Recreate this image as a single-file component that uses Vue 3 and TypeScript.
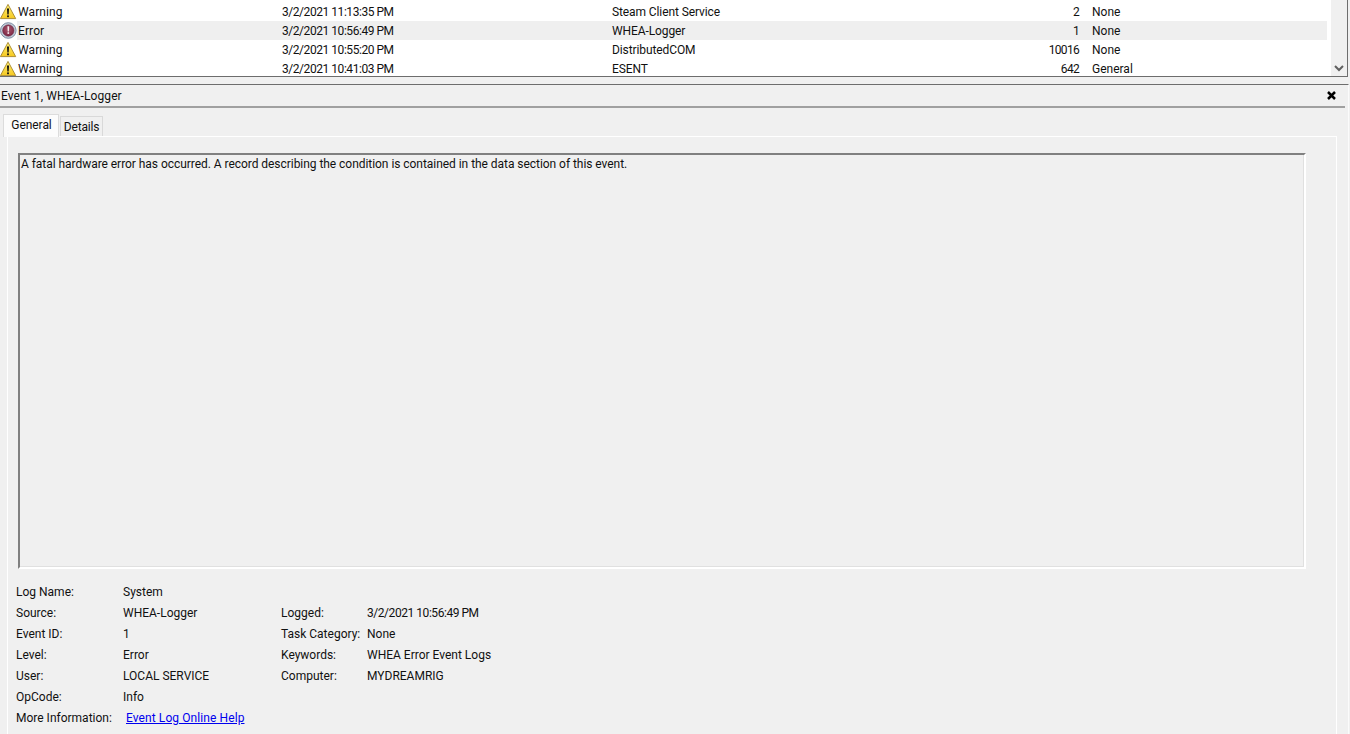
<script setup lang="ts">
interface Row { level: string; date: string; source: string; id: string; cat: string }
const rows: Row[] = [
  { level: 'Warning', date: '3/2/2021 11:13:35 PM', source: 'Steam Client Service', id: '2', cat: 'None' },
  { level: 'Error', date: '3/2/2021 10:56:49 PM', source: 'WHEA-Logger', id: '1', cat: 'None' },
  { level: 'Warning', date: '3/2/2021 10:55:20 PM', source: 'DistributedCOM', id: '10016', cat: 'None' },
  { level: 'Warning', date: '3/2/2021 10:41:03 PM', source: 'ESENT', id: '642', cat: 'General' },
]
const details: [string, string, string, string][] = [
  ['Log Name:', 'System', '', ''],
  ['Source:', 'WHEA-Logger', 'Logged:', '3/2/2021 10:56:49 PM'],
  ['Event ID:', '1', 'Task Category:', 'None'],
  ['Level:', 'Error', 'Keywords:', 'WHEA Error Event Logs'],
  ['User:', 'LOCAL SERVICE', 'Computer:', 'MYDREAMRIG'],
  ['OpCode:', 'Info', '', ''],
]
</script>

<template>
  <div class="app">
    <section class="list">
      <div class="rows">
        <div v-for="r in rows" :key="r.date" class="row">
          <span class="icon">
            <svg v-if="r.level === 'Warning'" width="17" height="17" viewBox="0 0 17 17">
              <defs>
                <linearGradient id="wg" x1="0" y1="0" x2="0" y2="1">
                  <stop offset="0" stop-color="#fff27a" />
                  <stop offset="1" stop-color="#f6c81e" />
                </linearGradient>
              </defs>
              <path d="M8 1.4 15.7 15.6H.4Z" fill="url(#wg)" stroke="#a5862a" stroke-width=".9" stroke-linejoin="round" />
              <path d="M7 5.6h2l-.35 6h-1.3Z" fill="#111" />
              <rect x="7.1" y="12.4" width="1.8" height="1.8" fill="#111" />
            </svg>
            <svg v-else width="17" height="17" viewBox="0 0 17 17">
              <defs>
                <radialGradient id="eg" cx=".5" cy=".4" r=".65">
                  <stop offset="0" stop-color="#a8576f" />
                  <stop offset="1" stop-color="#7a2240" />
                </radialGradient>
              </defs>
              <circle cx="8.3" cy="8.5" r="7.8" fill="#c3ccd8" stroke="#74849c" stroke-width=".9" />
              <circle cx="8.3" cy="8.5" r="5.7" fill="url(#eg)" stroke="#5e2a44" stroke-width=".5" />
              <path d="M7.4 4.2h1.8l-.3 5.2H7.7Z" fill="#f4e8ec" />
              <rect x="7.5" y="10.2" width="1.6" height="1.7" fill="#f4e8ec" />
            </svg>
          </span>
          <div class="cells" :class="{ sel: r.level === 'Error' }">
            <span class="level">{{ r.level }}</span>
            <span class="num">{{ r.date }}</span>
            <span class="source">{{ r.source }}</span>
            <span class="id">{{ r.id }}</span>
            <span class="cat">{{ r.cat }}</span>
          </div>
        </div>
      </div>
      <div class="scrollbar">
        <svg width="10" height="7" viewBox="0 0 10 7"><path d="M1 1l4 4 4-4" fill="none" stroke="#606060" stroke-width="2" /></svg>
      </div>
    </section>

    <section class="pane">
      <header class="pane-head">
        <span class="pane-title">Event 1, WHEA-Logger</span>
        <svg class="close" width="9" height="9" viewBox="0 0 9 9"><path d="M1 1l7 7M8 1L1 8" stroke="#000" stroke-width="2.5" /></svg>
      </header>

      <div class="tabs">
        <span class="tab active">General</span>
        <span class="tab">Details</span>
      </div>

      <div class="panel">
        <div class="message">A fatal hardware error has occurred. A record describing the condition is contained in the data section of this event.</div>
        <div class="details">
          <template v-for="d in details" :key="d[0]">
            <span>{{ d[0] }}</span>
            <span>{{ d[1] }}</span>
            <span>{{ d[2] }}</span>
            <span :class="{ num: d[3].endsWith('PM') }">{{ d[3] }}</span>
          </template>
          <span>More Information:</span>
          <a class="link" href="#">Event Log Online Help</a>
        </div>
      </div>
    </section>
  </div>
</template>

<style>
html, body { margin: 0; background: #f0f0f0; overflow: hidden; }
</style>

<style scoped>
.app {
  width: 1350px;
  height: 734px;
  overflow: hidden;
  background: #f0f0f0;
  color: #111;
  font: 12px/16px Roboto, "Noto Sans", sans-serif;
  display: flex;
  flex-direction: column;
}
.list {
  height: 76px;
  width: 1347px;
  background: #fff;
  border-right: 1px solid #6d6d6d;
  border-bottom: 1px solid #6d6d6d;
  display: flex;
  overflow: hidden;
  flex: none;
}
.rows {
  width: 1331px;
  padding-top: 2px;
  display: flex;
  flex-direction: column;
}
.row {
  height: 19px;
  display: flex;
  align-items: center;
  flex: none;
}
.icon {
  width: 17px;
  height: 17px;
  flex: none;
  display: flex;
}
.cells {
  width: 1310px;
  height: 19px;
  line-height: 21px;
  display: grid;
  grid-template-columns: 265px 330px 408px 60px 1fr;
  grid-template-rows: 19px;
  white-space: nowrap;
}
.sel { background: #efefef; }
.level { padding-left: 1px; letter-spacing: 0.1px; }
.num { letter-spacing: -0.45px; }
.source { letter-spacing: -0.1px; }
.id { text-align: right; letter-spacing: -0.7px; padding-right: 1px; }
.cat { padding-left: 12px; }
.scrollbar {
  width: 16px;
  background: #f0f0f0;
  display: flex;
  align-items: flex-end;
  justify-content: center;
  padding-bottom: 4px;
  box-sizing: border-box;
}
.pane {
  margin-top: 7px;
  width: 1348px;
  flex: 1;
  min-height: 0;
  border-top: 1px solid #6d6d6d;
  border-right: 1px solid #fbfbfb;
  display: flex;
  flex-direction: column;
}
.pane-head {
  width: 1345px;
  height: 23px;
  padding: 1px 0 0 1px;
  box-sizing: border-box;
  border-bottom: 2px solid #a0a0a0;
  display: flex;
  align-items: center;
  justify-content: space-between;
  flex: none;
}
.pane-title { letter-spacing: 0.1px; }
.close { margin: -2px 9px 0 0; }
.tabs {
  display: flex;
  align-items: flex-end;
  height: 28px;
  padding-left: 3px;
  flex: none;
}
.tab {
  height: 20px;
  line-height: 21px;
  width: 43px;
  text-align: center;
  box-sizing: border-box;
  border: 1px solid #d9d9d9;
  border-bottom: 0;
  margin-left: 1px;
  letter-spacing: -0.2px;
}
.tab.active {
  height: 23px;
  line-height: 21px;
  width: 56px;
  margin-left: 0;
  padding-left: 1px;
  border: 1px solid #dcdcdc;
  border-bottom: 0;
  margin-bottom: -1px;
  position: relative;
  background: #fcfcfc;
  letter-spacing: -0.05px;
}
.panel {
  flex: 1;
  margin-left: 7px;
  width: 1330px;
  box-sizing: border-box;
  border: 1px solid #fff;
  border-bottom: 0;
  padding: 16px 0 0 10px;
}
.message {
  width: 1288px;
  height: 416px;
  box-sizing: border-box;
  border-top: 2px solid #808080;
  border-left: 2px solid #808080;
  border-right: 2px solid #fff;
  border-bottom: 2px solid #fff;
  box-shadow: inset -1px -1px 0 #e0e0e0;
  padding: 1px 0 0 1px;
  letter-spacing: -0.045px;
}
.details {
  margin: 12px 0 0 -2px;
  display: grid;
  grid-template-columns: 107px 158px 86px 1fr;
  grid-auto-rows: 21px;
  line-height: 23px;
  white-space: nowrap;
}
.link {
  grid-column: 2 / 5;
  color: #0000ee;
  margin-left: 3px;
  letter-spacing: 0.09px;
}
</style>
